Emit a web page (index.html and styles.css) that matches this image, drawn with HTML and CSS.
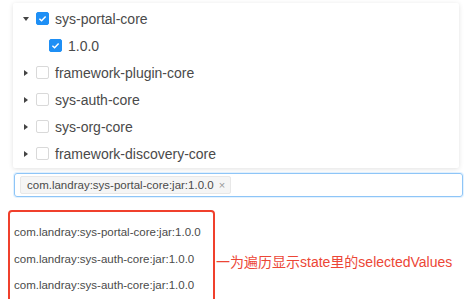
FILE: index.html
```html
<!DOCTYPE html>
<html>
<head>
<meta charset="utf-8">
<link rel="stylesheet" href="styles.css">
</head>
<body>
<div class="page">
  <div class="label">Parent</div>
  <div class="panel">
    <div class="row">
      <span class="caret down"></span>
      <span class="cb checked"><svg viewBox="0 0 12 12"><path d="M2.6 6.2 L5 8.5 L9.4 3.8" /></svg></span>
      <span class="txt">sys-portal-core</span>
    </div>
    <div class="row child">
      <span class="cb checked"><svg viewBox="0 0 12 12"><path d="M2.6 6.2 L5 8.5 L9.4 3.8" /></svg></span>
      <span class="txt">1.0.0</span>
    </div>
    <div class="row">
      <span class="caret right"></span>
      <span class="cb"></span>
      <span class="txt">framework-plugin-core</span>
    </div>
    <div class="row">
      <span class="caret right"></span>
      <span class="cb"></span>
      <span class="txt">sys-auth-core</span>
    </div>
    <div class="row">
      <span class="caret right"></span>
      <span class="cb"></span>
      <span class="txt">sys-org-core</span>
    </div>
    <div class="row">
      <span class="caret right"></span>
      <span class="cb"></span>
      <span class="txt">framework-discovery-core</span>
    </div>
  </div>
  <div class="select">
    <span class="tag">com.landray:sys-portal-core:jar:1.0.0<span class="close">×</span></span>
  </div>
  <div class="bottom">
    <div class="values">
      <div class="val">com.landray:sys-portal-core:jar:1.0.0</div>
      <div class="val">com.landray:sys-auth-core:jar:1.0.0</div>
      <div class="val">com.landray:sys-auth-core:jar:1.0.0</div>
    </div>
    <div class="note">一为遍历显示state里的selectedValues</div>
  </div>
</div>
</body>
</html>
```
FILE: styles.css
```css
html, body {
  margin: 0;
  padding: 0;
  background: #fff;
  overflow: hidden;
}
body {
  font-family: "Liberation Sans", "Noto Sans CJK SC", sans-serif;
  font-size: 12px;
  color: #4a4a4a;
}
.page {
  width: 474px;
  height: 299px;
  overflow: hidden;
}
.label {
  margin-top: -11px;
  margin-left: 17px;
  height: 14px;
  line-height: 14px;
  color: #999;
  font-size: 12px;
}
.panel {
  margin-left: 13px;
  width: 446px;
  padding: 2px 0 1px;
  background: #fff;
  box-shadow: 0 1px 5px rgba(0, 0, 0, 0.12);
  border-radius: 2px;
}
.row {
  height: 27px;
  display: flex;
  align-items: center;
  padding-left: 10px;
}
.row.child {
  padding-left: 36px;
}
.caret {
  width: 0;
  height: 0;
}
.caret.down {
  border-left: 3px solid transparent;
  border-right: 3px solid transparent;
  border-top: 4px solid #444;
  margin-left: 0;
  margin-right: 7px;
}
.caret.right {
  border-top: 3px solid transparent;
  border-bottom: 3px solid transparent;
  border-left: 4px solid #444;
  margin-left: 1px;
  margin-right: 8px;
}
.cb {
  width: 11px;
  height: 11px;
  border: 1px solid #d9d9d9;
  border-radius: 2px;
  background: #fff;
  display: flex;
  align-items: center;
  justify-content: center;
}
.cb.checked {
  background: #1e8ff5;
  border-color: #1e8ff5;
}
.cb svg {
  width: 11px;
  height: 11px;
  fill: none;
  stroke: #fff;
  stroke-width: 1.6;
}
.txt {
  margin-left: 6px;
  font-size: 14px;
  color: #4a4a4a;
}
.select {
  margin: 5px 0 0 14px;
  width: 442px;
  height: 22px;
  border: 1px solid #8ec5f7;
  border-radius: 3px;
  box-shadow: 0 0 0 1px rgba(24, 144, 255, 0.12);
  display: flex;
  align-items: center;
  padding-left: 5px;
}
.tag {
  height: 16px;
  line-height: 16px;
  padding: 0 5px 0 6px;
  background: #f5f5f5;
  border: 1px solid #e8e8e8;
  border-radius: 2px;
  color: #4a4a4a;
  font-size: 11.5px;
  display: flex;
  align-items: center;
}
.close {
  margin-left: 5px;
  color: #999;
  font-size: 11px;
}
.bottom {
  display: flex;
  margin-top: 13px;
  margin-left: 8px;
}
.values {
  width: 199px;
  border: 2px solid #f0402c;
  border-radius: 4px;
  padding: 7px 0 6px 4px;
  height: 100px;
}
.val {
  height: 26.5px;
  line-height: 26.5px;
  font-size: 11.5px;
  color: #4a4a4a;
  white-space: nowrap;
}
.note {
  margin-top: 44px;
  margin-left: 1px;
  font-size: 14px;
  line-height: 16px;
  color: #ec4636;
  white-space: nowrap;
}
```
